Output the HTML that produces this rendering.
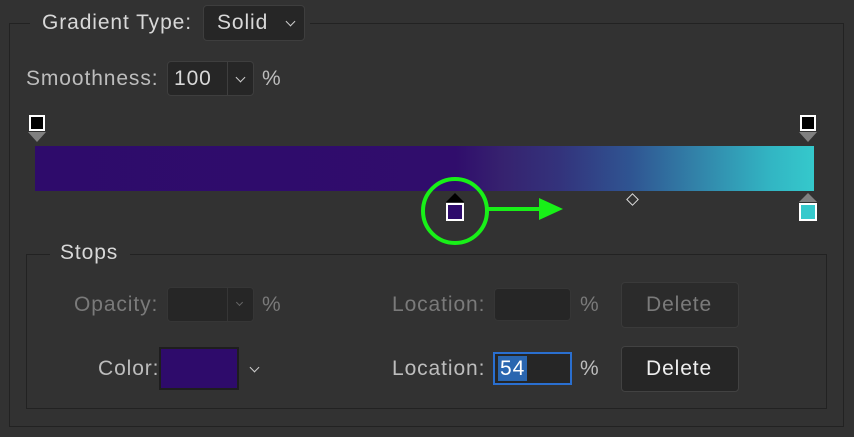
<!DOCTYPE html>
<html><head><style>
body{margin:0;width:854px;height:437px;background:#323232;overflow:hidden;position:relative;font-family:"Liberation Sans",sans-serif;color:#d8d8d8}
.a{position:absolute}
.t{position:absolute;font-size:21px;letter-spacing:0.9px;line-height:24px;white-space:nowrap}
.dim{color:#7a7a7a}
.box{position:absolute;background:#262626;border:1px solid #3e3e3e;border-radius:4px;box-sizing:border-box}
.chev{position:absolute;width:6px;height:6px;border-right:1.5px solid #ccc;border-bottom:1.5px solid #ccc;transform:rotate(45deg)}
</style></head><body>
<div class="a" style="left:9px;top:23px;width:835px;height:404px;border:1px solid #222;box-sizing:border-box"></div>
<div class="a" style="left:30px;top:10px;width:280px;height:30px;background:#323232"></div>
<div class="t" style="left:42px;top:11px">Gradient Type:</div>
<div class="box" style="left:203px;top:5px;width:102px;height:36px"></div>
<div class="t" style="left:217px;top:11px">Solid</div>
<div class="chev" style="left:287px;top:18px"></div>

<div class="t" style="left:26px;top:67px;color:#bdbdbd">Smoothness:</div>
<div class="box" style="left:167px;top:61px;width:87px;height:35px"></div>
<div class="a" style="left:227px;top:62px;width:1px;height:33px;background:#3e3e3e"></div>
<div class="t" style="left:174px;top:67px">100</div>
<div class="chev" style="left:237px;top:74px"></div>
<div class="t" style="left:262px;top:67px;color:#bdbdbd">%</div>

<div class="a" style="left:29px;top:115px;width:16px;height:16px;background:#000;border:2px solid #fff;box-sizing:border-box"></div>
<div class="a" style="left:28px;top:132px;border-left:9px solid transparent;border-right:9px solid transparent;border-top:10px solid #808080"></div>
<div class="a" style="left:800px;top:115px;width:16px;height:16px;background:#000;border:2px solid #fff;box-sizing:border-box"></div>
<div class="a" style="left:799px;top:132px;border-left:9px solid transparent;border-right:9px solid transparent;border-top:10px solid #808080"></div>

<div class="a" style="left:35px;top:146px;width:779px;height:45px;background:linear-gradient(90deg,#2e0b6b 0%,#300d6c 54%,#36226f 60%,#33337c 67.4%,#2f5592 76.6%,#3285aa 85.4%,#32b5c3 94.4%,#35c9cc 100%)"></div>

<div class="a" style="left:446px;top:193px;border-left:9px solid transparent;border-right:9px solid transparent;border-bottom:9px solid #000"></div>
<div class="a" style="left:446px;top:203px;width:18px;height:18px;background:#2e0b6b;border:2px solid #fff;box-sizing:border-box"></div>
<div class="a" style="left:628px;top:195px;width:7px;height:7px;border:1.5px solid #ddd;transform:rotate(45deg)"></div>
<div class="a" style="left:799px;top:193px;border-left:9px solid transparent;border-right:9px solid transparent;border-bottom:9px solid #808080"></div>
<div class="a" style="left:799px;top:203px;width:18px;height:18px;background:#35c9cc;border:2px solid #fff;box-sizing:border-box"></div>

<svg class="a" style="left:0;top:0" width="854" height="437"><circle cx="455" cy="211" r="32" fill="none" stroke="#18f018" stroke-width="4"/><line x1="488" y1="209" x2="542" y2="209" stroke="#18f018" stroke-width="4"/><polygon points="539,198 563,209 539,220" fill="#18f018"/></svg>

<div class="a" style="left:26px;top:254px;width:801px;height:155px;border:1px solid #222;box-sizing:border-box"></div>
<div class="a" style="left:50px;top:240px;width:80px;height:26px;background:#323232"></div>
<div class="t" style="left:60px;top:241px">Stops</div>

<div class="t dim" style="left:74px;top:293px">Opacity:</div>
<div class="box" style="left:167px;top:287px;width:87px;height:35px;border-color:#363636"></div>
<div class="a" style="left:227px;top:288px;width:1px;height:33px;background:#363636"></div>
<div class="chev" style="left:237px;top:300px;border-color:#666;width:4px;height:4px"></div>
<div class="t dim" style="left:262px;top:293px">%</div>
<div class="t dim" style="left:392px;top:293px">Location:</div>
<div class="box" style="left:494px;top:288px;width:77px;height:33px;border-color:#363636"></div>
<div class="t dim" style="left:580px;top:293px">%</div>
<div class="box" style="left:621px;top:282px;width:118px;height:46px;border-color:#3a3a3a;background:#2b2b2b"></div>
<div class="t dim" style="left:646px;top:293px">Delete</div>

<div class="t" style="left:98px;top:357px;color:#bdbdbd">Color:</div>
<div class="a" style="left:159px;top:347px;width:80px;height:43px;background:#2e0b6b;border:2px solid #1e1e1e;box-sizing:border-box"></div>
<div class="chev" style="left:251px;top:364px"></div>
<div class="t" style="left:392px;top:357px;color:#bdbdbd">Location:</div>
<div class="a" style="left:493px;top:352px;width:79px;height:33px;background:#262626;border:2px solid #2a6fd0;box-sizing:border-box"></div>
<div class="a" style="left:498px;top:356px;width:29px;height:25px;background:#2a66b0"></div>
<div class="t" style="left:500px;top:357px;color:#fff">54</div>
<div class="t" style="left:580px;top:357px;color:#bdbdbd">%</div>
<div class="box" style="left:621px;top:346px;width:118px;height:46px;border-color:#424242;background:#262626"></div>
<div class="t" style="left:646px;top:357px;color:#eee">Delete</div>
</body></html>
